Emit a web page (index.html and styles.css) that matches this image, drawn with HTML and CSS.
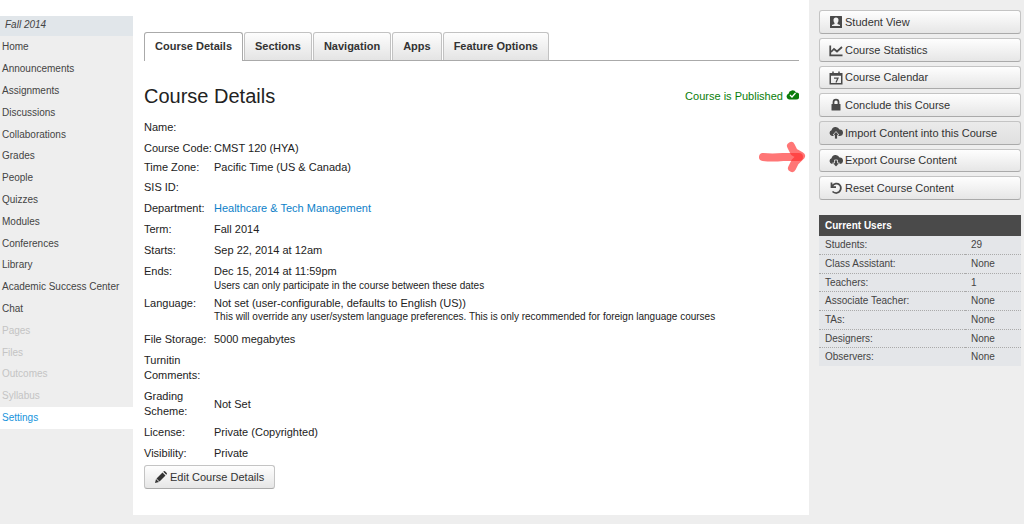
FILE: index.html
```html
<!DOCTYPE html>
<html lang="en">
<head>
<meta charset="utf-8">
<title>Course Details</title>
<link rel="stylesheet" href="styles.css">
</head>
<body>
<div class="page">
  <nav class="sidebar" aria-label="Course">
    <div class="term">Fall 2014</div>
    <ul class="menu">
      <li><a href="#">Home</a></li>
      <li><a href="#">Announcements</a></li>
      <li><a href="#">Assignments</a></li>
      <li><a href="#">Discussions</a></li>
      <li><a href="#">Collaborations</a></li>
      <li><a href="#">Grades</a></li>
      <li><a href="#">People</a></li>
      <li><a href="#">Quizzes</a></li>
      <li><a href="#">Modules</a></li>
      <li><a href="#">Conferences</a></li>
      <li><a href="#">Library</a></li>
      <li><a href="#">Academic Success Center</a></li>
      <li><a href="#">Chat</a></li>
      <li><a class="off" href="#">Pages</a></li>
      <li><a class="off" href="#">Files</a></li>
      <li><a class="off" href="#">Outcomes</a></li>
      <li><a class="off" href="#">Syllabus</a></li>
      <li><a class="active" href="#" aria-current="page">Settings</a></li>
    </ul>
  </nav>

  <main class="content">
    <div class="tabs" role="tablist">
      <button class="tab selected" role="tab" aria-selected="true">Course Details</button>
      <button class="tab" role="tab">Sections</button>
      <button class="tab" role="tab">Navigation</button>
      <button class="tab" role="tab">Apps</button>
      <button class="tab" role="tab">Feature Options</button>
    </div>
    <header class="heading">
      <h1>Course Details</h1>
      <p class="published">Course is Published
        <svg width="13" height="11" viewBox="0 0 26 22" aria-hidden="true"><path fill="#0a7d0a" d="M6 21a6 6 0 0 1-1-11.500A8 8 0 0 1 20 7a7 7 0 0 1 0 14z"/><path d="M8 12l4 4 7-8" fill="none" stroke="#fff" stroke-width="2.600"/></svg>
      </p>
    </header>
    <table class="details">
      <tr><th scope="row">Name:</th><td></td></tr>
      <tr><th scope="row">Course Code:</th><td>CMST 120 (HYA)</td></tr>
      <tr class="tight"><th scope="row">Time Zone:</th><td>Pacific Time (US &amp; Canada)</td></tr>
      <tr><th scope="row">SIS ID:</th><td></td></tr>
      <tr><th scope="row">Department:</th><td><a href="#">Healthcare &amp; Tech Management</a></td></tr>
      <tr><th scope="row">Term:</th><td>Fall 2014</td></tr>
      <tr><th scope="row">Starts:</th><td>Sep 22, 2014 at 12am</td></tr>
      <tr class="noted dates"><th scope="row">Ends:</th><td>Dec 15, 2014 at 11:59pm<small>Users can only participate in the course between these dates</small></td></tr>
      <tr class="noted language"><th scope="row">Language:</th><td>Not set (user-configurable, defaults to English (US))<small>This will override any user/system language preferences. This is only recommended for foreign language courses</small></td></tr>
      <tr><th scope="row">File Storage:</th><td>5000 megabytes</td></tr>
      <tr><th scope="row">Turnitin Comments:</th><td></td></tr>
      <tr><th scope="row">Grading Scheme:</th><td>Not Set</td></tr>
      <tr><th scope="row">License:</th><td>Private (Copyrighted)</td></tr>
      <tr><th scope="row">Visibility:</th><td>Private</td></tr>
    </table>
    <button class="btn edit">
      <svg width="12" height="12" viewBox="0 0 24 24" fill="#333" aria-hidden="true"><path d="M0 24l2-8 6 6zM3 15L15 3l6 6L9 21zM16.500 1.500l1-1q1.500-1 3 .5l2.500 2.500q1.500 1.500.5 3l-1 1z"/></svg>
      Edit Course Details
    </button>
  </main>

  <aside class="rail">
    <ul class="actions">
      <li><button class="btn"><svg width="14" height="14" viewBox="0 0 28 28" aria-hidden="true"><path fill="#4a4a4a" fill-rule="evenodd" d="M3 2h22q1 0 1 1v22q0 1-1 1H3q-1 0-1-1V3q0-1 1-1zM6 22h16v-2l-5-2v-2q2-2 2-6 0-5-5-5t-5 5q0 4 2 6v2l-5 2z"/></svg>Student View</button></li>
      <li><button class="btn"><svg width="14" height="14" viewBox="0 0 28 28" fill="none" stroke="#4a4a4a" stroke-width="3.500" aria-hidden="true"><path d="M2.500 5v19.500H27M4 18l6-6 6 5 10-9"/></svg>Course Statistics</button></li>
      <li><button class="btn"><svg width="14" height="14" viewBox="0 0 28 28" aria-hidden="true"><path fill="none" stroke="#4a4a4a" stroke-width="3" d="M2.500 5.500h23v20h-23zM2 8h24"/><path fill="none" stroke="#4a4a4a" stroke-width="3" d="M8 1v6M20 1v6"/><path fill="none" stroke="#4a4a4a" stroke-width="2.500" d="M10 14h8l-4 9"/></svg>Course Calendar</button></li>
      <li><button class="btn"><svg width="14" height="14" viewBox="0 0 28 28" aria-hidden="true"><path fill="none" stroke="#4a4a4a" stroke-width="3.500" d="M9 14V8q0-5 5-5t5 5v6"/><rect x="5" y="12" width="18" height="13" rx="1" fill="#4a4a4a"/></svg>Conclude this Course</button></li>
      <li><button class="btn hover"><svg width="14" height="14" viewBox="0 0 28 28" aria-hidden="true"><path fill="#4a4a4a" d="M6 20a6 6 0 0 1-1-11.500A8.500 8.500 0 0 1 21 7a6.500 6.500 0 0 1 1 13z"/><path fill="#4a4a4a" stroke="#ececec" stroke-width="1.500" d="M14 11l6 7h-3v8h-6v-8H8z"/></svg>Import Content into this Course</button></li>
      <li>
        <button class="btn"><svg width="14" height="14" viewBox="0 0 28 28" aria-hidden="true"><path fill="#4a4a4a" d="M6 20a6 6 0 0 1-1-11.500A8.500 8.500 0 0 1 21 7a6.500 6.500 0 0 1 1 13z"/><path fill="#4a4a4a" stroke="#f4f4f4" stroke-width="1.500" d="M11 12h6v6h4l-7 8-7-8h4z"/></svg>Export Course Content</button>
        <svg class="pointer" width="50" height="32" viewBox="0 0 50 32" fill="none" stroke-linecap="round" stroke-linejoin="round" aria-hidden="true"><g stroke="#ff2c2c" stroke-opacity=".65"><path d="M6 16q9 1 20 0h16" stroke-width="8"/><path d="M34 5l3 6 7 4-6 6-3 6" stroke-width="8"/></g></svg>
      </li>
      <li><button class="btn"><svg width="14" height="14" viewBox="0 0 28 28" fill="none" stroke="#4a4a4a" stroke-width="3.500" aria-hidden="true"><path d="M5 3v9h9M6 11C10 4 17 4 21 7.500c5 5 3 15-6 16.500q-5 0-8-3"/></svg>Reset Course Content</button></li>
    </ul>
    <table class="users">
      <thead><tr><th colspan="2" scope="colgroup">Current Users</th></tr></thead>
      <tbody>
        <tr><th scope="row">Students:</th><td>29</td></tr>
        <tr><th scope="row">Class Assistant:</th><td>None</td></tr>
        <tr><th scope="row">Teachers:</th><td>1</td></tr>
        <tr><th scope="row">Associate Teacher:</th><td>None</td></tr>
        <tr><th scope="row">TAs:</th><td>None</td></tr>
        <tr><th scope="row">Designers:</th><td>None</td></tr>
        <tr><th scope="row">Observers:</th><td>None</td></tr>
      </tbody>
    </table>
  </aside>
</div>
</body>
</html>
```
FILE: styles.css
```css
* { box-sizing: border-box; }
body {
  margin: 0;
  background: #eee;
  color: #222;
  font: 11px/15px "Liberation Sans", Arial, sans-serif;
}
ul { list-style: none; margin: 0; padding: 0; }
button { font: inherit; color: inherit; cursor: pointer; }
a { color: #0d7fc9; text-decoration: none; }
table { border-collapse: collapse; }
th { font-weight: normal; text-align: left; }

.page {
  display: grid;
  grid-template-columns: 133px 1fr 215px;
  align-items: start;
}

/* Course menu */
.sidebar { border-top: 16px solid #fff; font-size: 10px; }
.term {
  padding: 0 0 2px 5px;
  background: #e1e6ea;
  color: #444;
  font-style: italic;
  line-height: 18px;
}
.menu a {
  display: block;
  padding-left: 2px;
  color: #444;
  line-height: 22px;
  white-space: nowrap;
}
.menu li:nth-child(5n) a { line-height: 21px; }
.menu .off { color: #c4c4c4; }
.menu .active { background: #fff; color: #1593dc; }

/* Main panel */
.content { background: #fff; padding: 32px 10px 26px 11px; }
.tabs {
  display: flex;
  gap: 1px;
  border-bottom: 1px solid #aaa;
}
.tab {
  padding: 0 10px 1px;
  border: 1px solid #c2c2c2;
  border-bottom: 0;
  border-radius: 3px 3px 0 0;
  background: linear-gradient(#fdfdfd, #e4e4e4);
  color: #333;
  font-weight: bold;
  line-height: 26px;
}
.tab.selected {
  margin-bottom: -1px;
  padding-bottom: 2px;
  border-color: #aaa;
  background: #fff;
}
.heading {
  display: flex;
  justify-content: space-between;
  align-items: center;
  padding: 22px 0 8px;
}
h1 { margin: 0; font-size: 20px; font-weight: normal; line-height: 26px; }
.published { margin: 0; color: #0a7d0a; }
.details th { width: 70px; padding: 3px 0; }
.details td { padding: 3px 0; }
.details .tight > * { padding: 1px 0 2px; }
.noted th { vertical-align: top; }
.details small { display: block; font-size: 10px; line-height: 12px; }
.details .dates td { padding-bottom: 1px; }
.details .dates small { padding-top: 1px; }
.details .language td { padding-bottom: 6px; }

.btn {
  display: flex;
  align-items: center;
  height: 24px;
  padding: 0 10px;
  border: 1px solid #c4c4c4;
  border-bottom-color: #aaa;
  border-radius: 3px;
  background: linear-gradient(#fefefe, #e6e6e6);
  color: #333;
}
.btn.hover { background: linear-gradient(#ebebeb, #e0e0e0); }
.edit { gap: 3px; margin-top: 1px; }

/* Right rail */
.rail { padding: 10px 3px 0 10px; }
.actions { display: grid; gap: 4px; }
.actions li { position: relative; }
.actions .btn { width: 100%; gap: 2px; padding-left: 9px; }
.actions li:nth-child(3n) .btn { height: 23px; }
.pointer { position: absolute; right: 100%; top: 50%; margin: -20px 12px 0 0; }
.users {
  width: 100%;
  margin-top: 15px;
  background: #e4e6e9;
  color: #444;
  font-size: 10px;
}
.users th, .users td { padding: 0 0 0 6px; line-height: 18px; }
.users tbody tr:nth-child(3n) > * { line-height: 17px; }
.users thead th { background: #4a4a4a; color: #fff; font-weight: bold; line-height: 21px; }
.users tbody tr + tr { border-top: 1px dotted #aaa; }
.users td { width: 56px; }
```
